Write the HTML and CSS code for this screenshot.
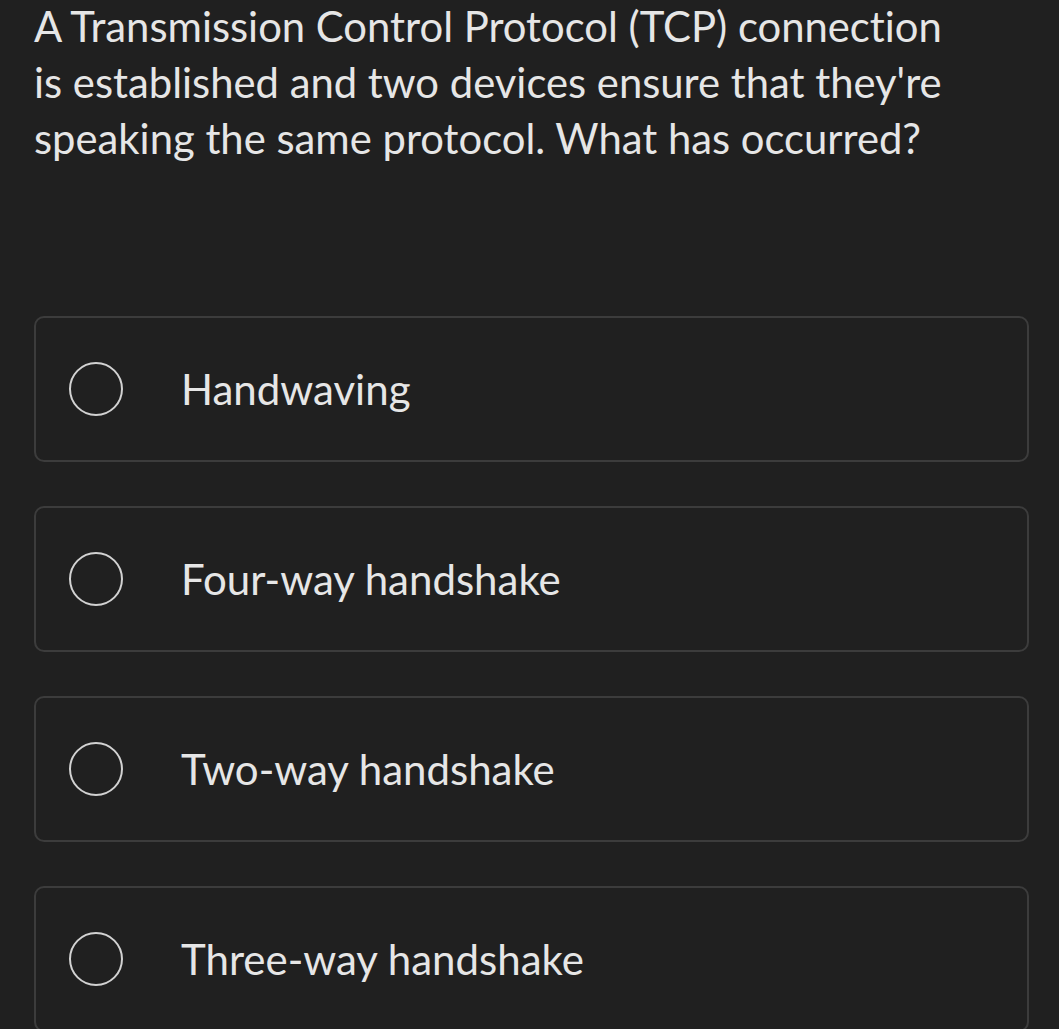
FILE: index.html
```html
<!DOCTYPE html>
<html lang="en">
<head>
<meta charset="UTF-8">
<meta name="viewport" content="width=device-width, initial-scale=1.0">
<title>Quiz</title>
<link rel="stylesheet" href="styles.css">
</head>
<body>

<div class="quiz">
    <p class="question">A Transmission Control Protocol (TCP) connection<br>is established and two devices ensure that they're<br>speaking the same protocol. What has occurred?</p>

    <!-- Opções de resposta -->
    <div class="options">
        <label class="option">
            <span class="radio"></span>
            <span class="option-text">Handwaving</span>
        </label>
        <label class="option">
            <span class="radio"></span>
            <span class="option-text">Four-way handshake</span>
        </label>
        <label class="option">
            <span class="radio"></span>
            <span class="option-text">Two-way handshake</span>
        </label>
        <label class="option">
            <span class="radio"></span>
            <span class="option-text">Three-way handshake</span>
        </label>
    </div>
</div>

</body>
</html>
```

FILE: styles.css
```css
html, body {
    background-color: #202020;
}

body {
    font-family: Lato, "Open Sans", sans-serif;
    font-variant-ligatures: none;
    margin: 0;
    padding: 0;
    color: #e6e6e6;
    overflow: hidden;
}

.quiz {
    padding: 0 30px 0 34px;
}

.question {
    margin: -2px 0 0 0;
    font-size: 41.8px;
    line-height: 56px;
    white-space: nowrap;
}

.options {
    display: flex;
    flex-direction: column;
    gap: 44px;
    margin-top: 150px;
}

.option {
    display: flex;
    align-items: center;
    height: 146px;
    box-sizing: border-box;
    border: 2px solid #3c3c3c;
    border-radius: 10px;
    padding-left: 33px;
}

.radio {
    width: 54px;
    height: 54px;
    box-sizing: border-box;
    border: 2px solid #d2d2d2;
    border-radius: 50%;
    flex-shrink: 0;
}

.option-text {
    margin-left: 58px;
    font-size: 42px;
    color: #e6e6e6;
}
```
